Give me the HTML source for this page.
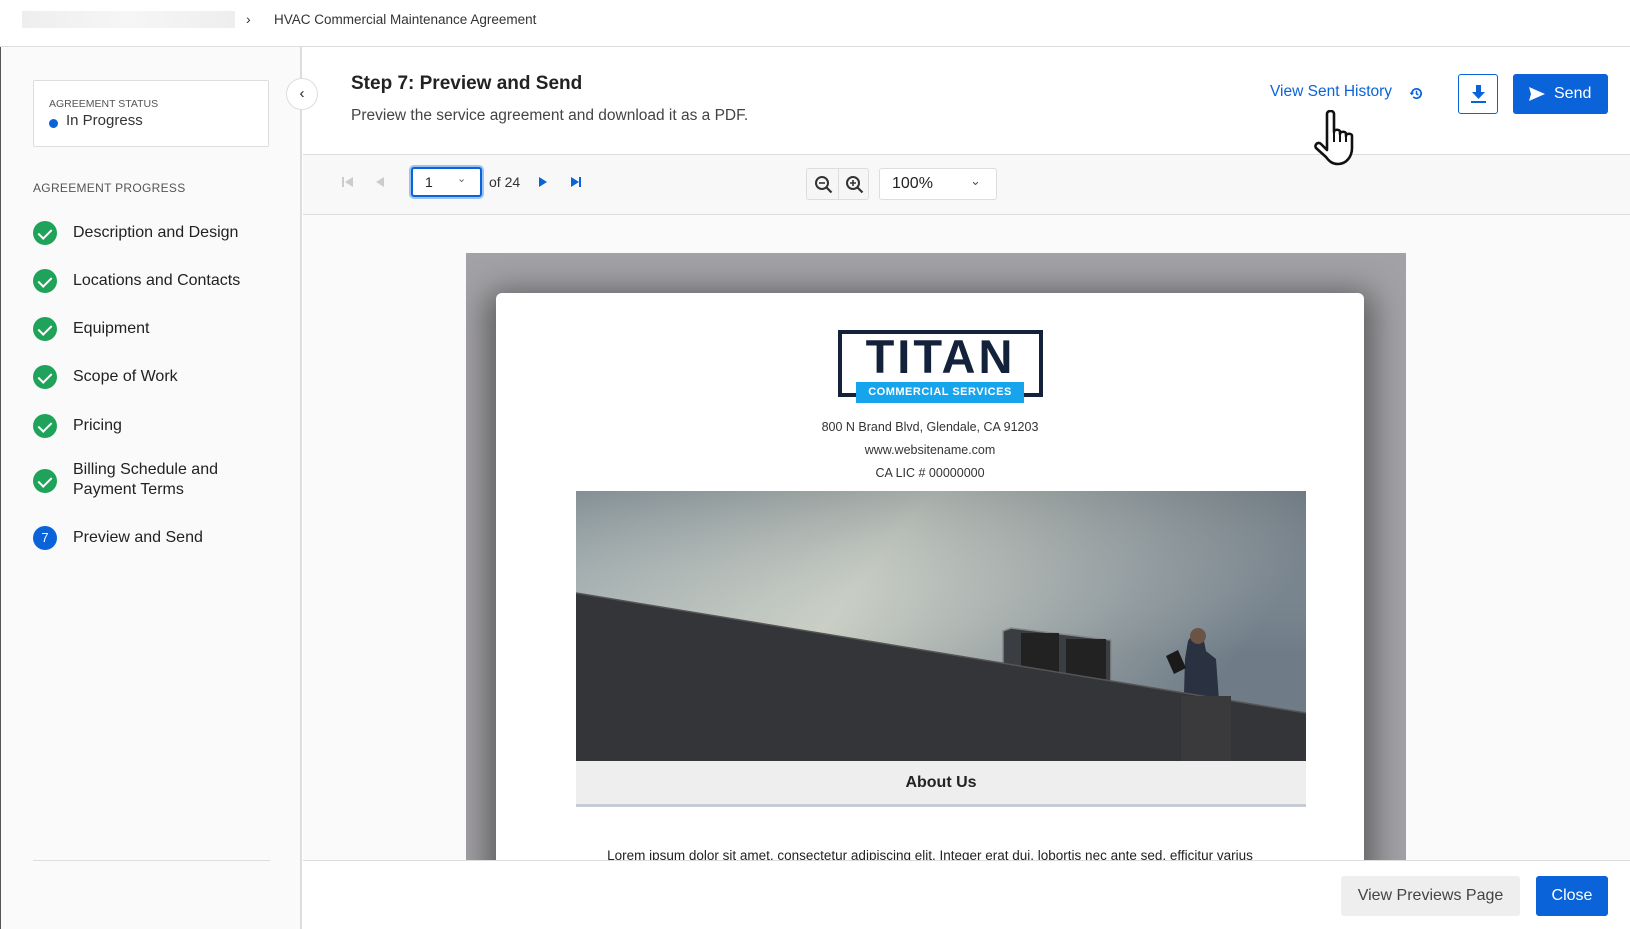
<!DOCTYPE html>
<html><head><meta charset="utf-8"><style>
*{box-sizing:border-box;margin:0;padding:0}
body{width:1630px;height:929px;overflow:hidden;background:#fff;font-family:"Liberation Sans",sans-serif;color:#222;position:relative}
.abs{position:absolute}
.top{left:0;top:0;width:1630px;height:47px;border-bottom:1px solid #ddd;background:#fff}
.side{left:0;top:47px;width:302px;height:882px;background:#fafafa;border-right:2px solid #ddd;border-left:1px solid #555}
.step{position:absolute;left:33px;font-size:16px;color:#222}
.ic{position:absolute;left:0;width:24px;height:24px;border-radius:50%;background:#1fa35a}
.txt{position:absolute;left:40px;white-space:nowrap;line-height:20px}
</style></head><body>
<div class="abs top">
 <div class="abs" style="left:22px;top:11px;width:213px;height:17px;background:linear-gradient(90deg,#eee,#f6f6f6,#eee)"></div>
 <div class="abs" style="left:246px;top:11px;font-size:14px;color:#333">›</div>
 <div class="abs" style="left:274px;top:12px;font-size:13.5px;color:#333">HVAC Commercial Maintenance Agreement</div>
</div>
<div class="abs side">
 <div class="abs" style="left:32px;top:33px;width:236px;height:67px;border:1px solid #ddd;background:#fff;border-radius:2px">
  <div class="abs" style="left:15px;top:17px;font-size:10.5px;color:#555">AGREEMENT STATUS</div>
  <div class="abs" style="left:15px;top:38px;width:9px;height:9px;border-radius:50%;background:#0a63d8"></div>
  <div class="abs" style="left:32px;top:31px;font-size:15px;color:#333">In Progress</div>
 </div>
 <div class="abs" style="left:32px;top:134px;font-size:12px;color:#555;letter-spacing:.3px">AGREEMENT PROGRESS</div>
 <div class="abs" style="left:32px;top:813px;width:237px;height:1px;background:#ddd"></div>
</div>
<div class="abs" style="left:286px;top:78px;width:32px;height:32px;border-radius:50%;background:#fff;border:1px solid #ddd;text-align:center;line-height:29px;font-size:15px;color:#222">‹</div>

<div class="abs" style="left:351px;top:73px;font-size:19px;font-weight:bold;color:#222">Step 7: Preview and Send</div>
<div class="abs" style="left:351px;top:107px;font-size:15.5px;color:#444">Preview the service agreement and download it as a PDF.</div>
<div class="abs" style="left:1270px;top:83px;font-size:15.5px;color:#0a63d8">View Sent History</div>
<svg class="abs" style="left:1409px;top:86px" width="15" height="15" viewBox="0 0 16 16"><path d="M3 8a5 5 0 1 1 1.5 3.6" fill="none" stroke="#0a63d8" stroke-width="1.8"/><path d="M0.5 7h5L3 10z" fill="#0a63d8"/><path d="M8 5v3.3l2 1.3" fill="none" stroke="#0a63d8" stroke-width="1.6"/></svg>
<div class="abs" style="left:1458px;top:74px;width:40px;height:40px;border:1px solid #0a63d8;border-radius:3px;background:#fff">
 <svg class="abs" style="left:11px;top:10px" width="17" height="19" viewBox="0 0 17 19"><path d="M6 0h5v7h4l-6.5 7L2 7h4z" fill="#0a63d8"/><rect x="1" y="16" width="15" height="2" fill="#0a63d8"/></svg>
</div>
<div class="abs" style="left:1513px;top:74px;width:95px;height:40px;background:#0a63d8;border-radius:3px;color:#fff;font-size:16px">
 <svg class="abs" style="left:16px;top:13px" width="16" height="14" viewBox="0 0 16 14"><path d="M0 0l16 7-16 7 2-7z" fill="#fff"/></svg>
 <div class="abs" style="left:41px;top:11px">Send</div>
</div>

<div class="abs" style="left:303px;top:154px;width:1327px;height:61px;background:#f8f8f8;border-top:1px solid #ddd;border-bottom:1px solid #ddd"></div>
<svg class="abs" style="left:342px;top:176px" width="12" height="12"><rect x="0" y="1" width="2" height="10" fill="#ccc"/><path d="M11 1v10L3 6z" fill="#ccc"/></svg>
<svg class="abs" style="left:375px;top:176px" width="10" height="12"><path d="M9 1v10L1 6z" fill="#ccc"/></svg>
<div class="abs" style="left:411px;top:167px;width:71px;height:30px;border:2px solid #0a63d8;border-radius:3px;background:#fff;box-shadow:0 0 0 2px #9cc4f3">
 <div class="abs" style="left:12px;top:5px;font-size:14px">1</div>
 <div class="abs" style="left:44px;top:3px;font-size:11px;color:#666">⌄</div>
</div>
<div class="abs" style="left:489px;top:174px;font-size:14px;color:#333">of 24</div>
<svg class="abs" style="left:538px;top:176px" width="10" height="12"><path d="M1 1v10l8-5z" fill="#0a63d8"/></svg>
<svg class="abs" style="left:570px;top:176px" width="12" height="12"><path d="M1 1v10l8-5z" fill="#0a63d8"/><rect x="9" y="1" width="2" height="10" fill="#0a63d8"/></svg>
<div class="abs" style="left:806px;top:168px;width:63px;height:32px;border:1px solid #ddd;border-radius:3px;background:#f6f6f6"><div class="abs" style="left:31px;top:0;width:1px;height:30px;background:#ddd"></div>
 <svg class="abs" style="left:7px;top:6px" width="20" height="20" viewBox="0 0 20 20"><circle cx="8" cy="8" r="6" fill="none" stroke="#333" stroke-width="2"/><path d="M12.5 12.5l5 5" stroke="#333" stroke-width="2.2"/><path d="M5 8h6" stroke="#333" stroke-width="1.6"/></svg>
 <svg class="abs" style="left:38px;top:6px" width="20" height="20" viewBox="0 0 20 20"><circle cx="8" cy="8" r="6" fill="none" stroke="#333" stroke-width="2"/><path d="M12.5 12.5l5 5" stroke="#333" stroke-width="2.2"/><path d="M5 8h6M8 5v6" stroke="#333" stroke-width="1.6"/></svg>
</div>
<div class="abs" style="left:879px;top:168px;width:118px;height:32px;border:1px solid #ddd;border-radius:3px;background:#fff">
 <div class="abs" style="left:12px;top:6px;font-size:16px;color:#222">100%</div>
 <div class="abs" style="left:90px;top:4px;font-size:13px;color:#555">⌄</div>
</div>

<div class="abs" style="left:303px;top:215px;width:1327px;height:645px;background:#fafafa"></div>
<div class="abs" style="left:466px;top:253px;width:940px;height:607px;background:#a2a1a5;overflow:hidden">
 <div class="abs" style="left:30px;top:40px;width:868px;height:620px;background:#fff;border-radius:6px;box-shadow:0 8px 30px 10px rgba(60,60,60,.65)">
  <div class="abs" style="left:342px;top:37px;width:205px;height:67px;border:4px solid #14213a"></div>
  <div class="abs" style="left:342px;top:38px;width:205px;text-align:center;font-size:47px;font-weight:bold;color:#14213a;letter-spacing:3px;line-height:52px">TITAN</div>
  <div class="abs" style="left:360px;top:89px;width:168px;height:21px;background:#16a4ec;color:#fff;font-size:11px;font-weight:bold;text-align:center;line-height:21px;letter-spacing:.5px">COMMERCIAL SERVICES</div>
  <div class="abs" style="left:0;top:123px;width:868px;text-align:center;font-size:12.5px;color:#333;line-height:23px">800 N Brand Blvd, Glendale, CA 91203<br>www.websitename.com<br>CA LIC # 00000000</div>
  <svg class="abs" style="left:80px;top:198px" width="730" height="270" viewBox="0 0 730 270">
   <defs><linearGradient id="sk" x1="0" y1="0" x2="1" y2="0.3"><stop offset="0" stop-color="#9aa7aa"/><stop offset=".45" stop-color="#c9cec4"/><stop offset="1" stop-color="#6f7c87"/></linearGradient>
   <linearGradient id="sk2" x1="0" y1="0" x2="0" y2="1"><stop offset="0" stop-color="rgba(80,90,100,.3)"/><stop offset=".6" stop-color="rgba(255,255,255,0)"/></linearGradient></defs>
   <rect width="730" height="270" fill="url(#sk)"/><rect width="730" height="270" fill="url(#sk2)"/>
   <path d="M427 140l8-3 100 12v45l-108-12z" fill="#3a3d42" stroke="#888" stroke-width="1.5"/>
   <rect x="445" y="142" width="38" height="40" fill="#222"/><rect x="490" y="148" width="40" height="40" fill="#222"/>
   <path d="M612 150c4-8 14-8 16 0l2 10 10 8 5 70h-38l2-70z" fill="#2a3140"/>
   <circle cx="622" cy="145" r="8" fill="#6b5446"/>
   <path d="M590 165l12-6 8 18-12 6z" fill="#1a1a1a"/>
   <path d="M0 102L730 222V270H0z" fill="#333538"/>
   <path d="M0 102L730 222" stroke="#555" stroke-width="1.5"/>
   <rect x="605" y="205" width="50" height="65" fill="#3a3a3c"/>
  </svg>
  <div class="abs" style="left:80px;top:468px;width:730px;height:46px;background:#eee;border-bottom:3px solid #c5ccd3;text-align:center;font-size:16px;font-weight:bold;line-height:44px;color:#222">About Us</div>
  <div class="abs" style="left:0;top:555px;width:868px;text-align:center;font-size:13.5px;color:#222;white-space:nowrap">Lorem ipsum dolor sit amet, consectetur adipiscing elit. Integer erat dui, lobortis nec ante sed, efficitur varius</div>
 </div>
</div>

<div class="abs" style="left:303px;top:860px;width:1327px;height:69px;background:#fff;border-top:1px solid #ddd"></div>
<div class="abs" style="left:1341px;top:876px;width:179px;height:40px;background:#eee;border-radius:3px;font-size:16px;color:#444;text-align:center;line-height:40px">View Previews Page</div>
<div class="abs" style="left:1536px;top:876px;width:72px;height:40px;background:#0a63d8;border-radius:3px;font-size:16px;color:#fff;text-align:center;line-height:40px">Close</div>

<svg class="abs" style="left:1313px;top:110px" width="50" height="58" viewBox="0 0 50 58"><path d="M14 4c0-4 7-4 7 0v18c0-3 6-3 6 0v2c0-3 6-3 6 0v2c0-3 6-3 6 0v12c0 9-6 16-14 16-6 0-9-3-12-7L3 38c-2-3 2-7 5-4l6 6z" fill="#fff" stroke="#111" stroke-width="2.6" stroke-linejoin="round"/><path d="M21 22v10M27 24v8M33 26v6" stroke="#111" stroke-width="2"/></svg>

<div class="abs" style="left:0;top:0">
 <div class="step" style="top:221px"><div class="ic" style="top:0"></div><div class="txt" style="top:2px">Description and Design</div></div>
 <div class="step" style="top:269px"><div class="ic"></div><div class="txt" style="top:2px">Locations and Contacts</div></div>
 <div class="step" style="top:317px"><div class="ic"></div><div class="txt" style="top:2px">Equipment</div></div>
 <div class="step" style="top:365px"><div class="ic"></div><div class="txt" style="top:2px">Scope of Work</div></div>
 <div class="step" style="top:414px"><div class="ic"></div><div class="txt" style="top:2px">Pricing</div></div>
 <div class="step" style="top:469px"><div class="ic"></div><div class="txt" style="top:-9px">Billing Schedule and<br>Payment Terms</div></div>
 <div class="step" style="top:526px"><div class="ic" style="background:#0a63d8;color:#fff;font-size:13px;text-align:center;line-height:24px">7</div><div class="txt" style="top:2px">Preview and Send</div></div>
</div>
<style>.ic:not([style*="0a63d8"])::after{content:"";position:absolute;left:8px;top:5px;width:6px;height:11px;border:solid #fff;border-width:0 2px 2px 0;transform:rotate(45deg)}</style>
</body></html>
